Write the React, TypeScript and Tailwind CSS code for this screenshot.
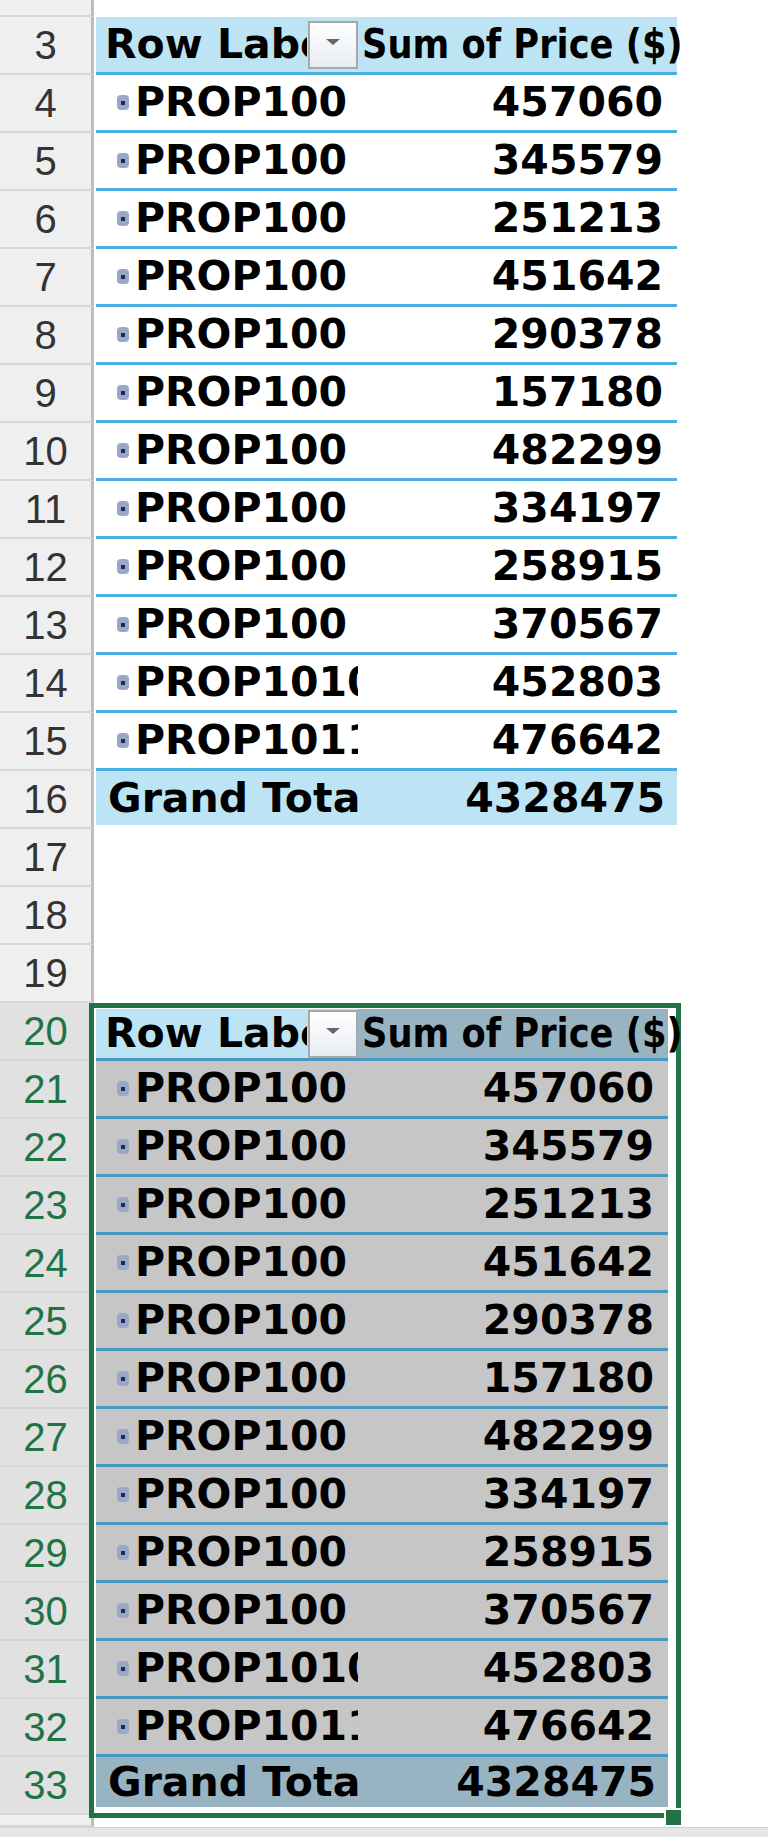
import React from "react";

const vals = ["457060","345579","251213","451642","290378","157180","482299","334197","258915","370567","452803","476642"];
const labels = ["PROP100","PROP100","PROP100","PROP100","PROP100","PROP100","PROP100","PROP100","PROP100","PROP100","PROP1010","PROP1011"];

const F = { fontFamily: '"DejaVu Sans", "Liberation Sans", sans-serif' };
const G = { fontFamily: '"Liberation Sans", Arial, sans-serif' };

function Gut({ n, sel }: { n: number | string; sel?: boolean }) {
  return (
    <div className={`w-[94px] shrink-0 h-full border-b-2 border-[#d6d6d6] border-r-[3px] border-r-[#bdbdbd] flex items-center justify-center ${sel ? "bg-[#e1e1e1] text-[#217346]" : "bg-[#efefef] text-[#333]"}`}>
      <span className="inline-block text-[40px] leading-none" style={G}>{n}</span>
    </div>
  );
}

function Icon() {
  return (
    <span className="w-[12px] h-[15px] rounded-[4px] bg-[#9aa8c8] flex items-center justify-center mr-[6px] shrink-0">
      <span className="w-[4px] h-[4px] bg-[#1e2b5a]" />
    </span>
  );
}

function Txt({ children, cls = "" }: { children: React.ReactNode; cls?: string }) {
  return (
    <span className={`inline-block font-bold text-[41px] leading-none whitespace-nowrap ${cls}`} style={F}>{children}</span>
  );
}

function Table({ sel }: { sel: boolean }) {
  const rowBg = sel ? "bg-[#c6c6c6]" : "bg-white";
  const line = sel ? "border-[#4a98bf]" : "border-[#49b0e0]";
  const hdr2 = sel ? "bg-[#98b3c1]" : "bg-[#bde4f4]";
  const tot = sel ? "bg-[#98b3c1]" : "bg-[#bde4f4]";
  const start = sel ? 20 : 3;
  const w = sel ? "w-[572px] ml-[2px]" : "w-[581px] ml-[2px]";
  return (
    <div className="relative">
      <div className="flex h-[58px]">
        <Gut n={start} sel={sel} />
        <div className={`${w} flex border-b-[3px] ${line} ${sel ? "mt-[6px]" : ""}`}>
          <div className="w-[211px] shrink-0 overflow-hidden bg-[#bde4f4] flex items-center pl-[9px]">
            <Txt>Row Labels</Txt>
          </div>
          <div className="w-[51px] shrink-0 flex items-center justify-center bg-[#bde4f4]">
            <div className="w-[50px] h-[48px] border-2 border-[#a8a8a8] bg-gradient-to-b from-white to-[#e8edf3] flex items-start justify-center pt-[16px]">
              <div className="w-0 h-0 border-l-[7px] border-r-[7px] border-t-[6px] border-l-transparent border-r-transparent border-t-[#666]" />
            </div>
          </div>
          <div className={`flex-1 ${hdr2} flex items-center relative`}>
            <span className="absolute left-[4px] whitespace-nowrap z-10"><Txt cls="scale-x-[0.86] origin-left">Sum of Price ($)</Txt></span>
          </div>
        </div>
      </div>
      {vals.map((v, i) => (
        <div key={i} className="flex h-[58px]">
          <Gut n={start + 1 + i} sel={sel} />
          <div className={`${w} flex ${rowBg} border-b-[3px] ${line}`}>
            <div className="w-[262px] shrink-0 overflow-hidden flex items-center pl-[21px]">
              <Icon />
              <Txt>{labels[i]}</Txt>
            </div>
            <div className="flex-1 flex items-center justify-end pr-[14px]">
              <Txt>{v}</Txt>
            </div>
          </div>
        </div>
      ))}
      <div className="flex h-[58px]">
        <Gut n={start + 13} sel={sel} />
        <div className={`${w} flex ${tot} ${sel ? "mb-[8px]" : "mb-[4px]"}`}>
          <div className="w-[262px] shrink-0 overflow-hidden flex items-center pl-[12px]">
            <Txt>Grand Total</Txt>
          </div>
          <div className="flex-1 flex items-center justify-end pr-[12px]">
            <Txt>4328475</Txt>
          </div>
        </div>
      </div>
      {sel && (
        <>
          <div className="absolute left-[89px] top-0 w-[592px] h-[815px] border-[5px] border-[#217346] pointer-events-none" />
          <div className="absolute left-[664px] top-[805px] w-[19px] h-[19px] bg-[#217346] border-2 border-white" />
        </>
      )}
    </div>
  );
}

export default function App() {
  return (
    <div className="w-[768px] h-[1837px] bg-white overflow-hidden text-black">
      <div className="flex h-[17px]"><Gut n="" /></div>
      <Table sel={false} />
      {[17, 18, 19].map((n) => (
        <div key={n} className="flex h-[58px]"><Gut n={n} /></div>
      ))}
      <Table sel={true} />
      <div className="flex h-[12px] overflow-hidden"><Gut n="" /></div>
      <div className="h-[30px] bg-[#e6e6e6] border-t border-[#d0d0d0]" />
    </div>
  );
}
